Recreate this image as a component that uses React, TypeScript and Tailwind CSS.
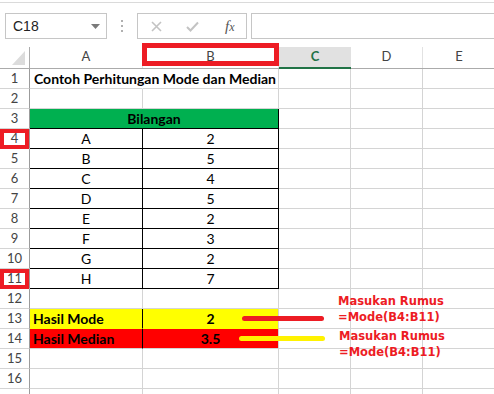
import React from "react";

const font = { fontFamily: "Lato, 'Open Sans', sans-serif" };

type Cell = {
  text?: string;
  cls?: string;
};

const colW = ["w-[30px]", "w-[113px]", "w-[136px]", "w-[72px]", "w-[72px]", "w-[72px]"];

function Row({ n, cells, marked }: { n?: number; cells: Cell[]; marked?: boolean }) {
  return (
    <div className="flex h-[20px]">
      <div
        className={`${colW[0]} shrink-0 border-r border-b border-r-[#9b9b9b] border-b-[#d4d4d4] flex items-center justify-center text-[13px] text-[#444] relative`}
      >
        {n}
        {marked && <div className="absolute left-0 top-0 w-[29px] h-[20px] border-[4px] border-[#ed1c24]" />}
      </div>
      {cells.map((c, i) => (
        <div
          key={i}
          className={`${colW[i + 1]} shrink-0 border-r border-b h-[20px] flex items-center text-[14px] text-black whitespace-nowrap ${
            c.cls ?? "border-[#d4d4d4]"
          }`}
        >
          {c.text}
        </div>
      ))}
    </div>
  );
}

export default function App() {
  const data = [
    ["A", "2"],
    ["B", "5"],
    ["C", "4"],
    ["D", "5"],
    ["E", "2"],
    ["F", "3"],
    ["G", "2"],
    ["H", "7"],
  ];
  const grid = "border-[#d4d4d4]";
  const blank: Cell[] = [{}, {}, {}, {}, {}];

  return (
    <div className="w-[494px] h-[394px] overflow-hidden bg-white relative" style={font}>
      {/* top strip */}
      <div className="h-[3px] border-b border-[#dadada]" />

      {/* formula bar */}
      <div className="flex items-center mt-[10px] h-[26px]">
        <div className="ml-[5px] w-[102px] h-[26px] border border-[#c6c6c6] flex items-center pl-[7px] pr-[6px] text-[14px] text-[#222]">
          <span className="flex-1" style={{ fontFamily: "'Liberation Sans', Arial, sans-serif" }}>C18</span>
          <svg width="9" height="5" viewBox="0 0 9 5">
            <path d="M0 0 L9 0 L4.5 5 Z" fill="#7a7a7a" />
          </svg>
        </div>
        <div className="w-[30px] flex flex-col items-center gap-[3px]">
          <div className="w-[2px] h-[2px] bg-[#b0b0b0]" />
          <div className="w-[2px] h-[2px] bg-[#b0b0b0]" />
          <div className="w-[2px] h-[2px] bg-[#b0b0b0]" />
        </div>
        <div className="w-[110px] h-[26px] border border-[#c6c6c6] flex items-center">
          <svg width="11" height="11" viewBox="0 0 11 11" className="ml-[13px]">
            <path d="M1 1 L10 10 M10 1 L1 10" stroke="#c3c3c3" strokeWidth="1.6" />
          </svg>
          <svg width="13" height="11" viewBox="0 0 13 11" className="ml-[24px]">
            <path d="M1 6 L4.5 9.5 L12 1.5" stroke="#c3c3c3" strokeWidth="2" fill="none" />
          </svg>
          <span
            className="ml-[26px] italic text-[15px] text-[#555]"
            style={{ fontFamily: "'Liberation Serif', serif" }}
          >
            f<span className="text-[12px]">x</span>
          </span>
        </div>
        <div className="ml-[4px] flex-1 h-[26px] border border-r-0 border-[#c6c6c6]" />
      </div>

      {/* column headers */}
      <div className="flex h-[22px] mt-[8px] border-b border-[#ababab] text-[13px] text-[#444]">
        <div className={`${colW[0]} shrink-0 border-r border-[#ababab] relative`}>
          <svg width="13" height="14" viewBox="0 0 13 14" className="absolute left-[12px] top-[4px]">
            <path d="M13 0 L13 14 L0 14 Z" fill="#dcdcdc" />
          </svg>
        </div>
        <div className={`${colW[1]} shrink-0 border-r border-[#e2e2e2] flex items-end justify-center pb-[2px]`}>A</div>
        <div className={`${colW[2]} shrink-0 border-r border-[#e2e2e2] flex items-end justify-center pb-[2px] relative`}>
          B
          <div className="absolute left-[-1px] top-[-4px] w-[137px] h-[23px] border-[5px] border-[#ed1c24]" />
        </div>
        <div className={`${colW[3]} shrink-0 bg-[#e1e1e1] border-b-2 border-[#217346] -mb-[1px] flex items-end justify-center pb-[1px] font-bold text-[#217346]`}>
          C
        </div>
        <div className={`${colW[4]} shrink-0 border-r border-[#e2e2e2] flex items-end justify-center pb-[2px]`}>D</div>
        <div className={`${colW[5]} shrink-0 flex items-end justify-center pb-[2px]`}>E</div>
      </div>

      {/* rows */}
      <Row
        n={1}
        cells={[
          { text: "Contoh Perhitungan Mode dan Median", cls: "border-b-[#d4d4d4] border-r-transparent pl-[4px] font-bold" },
          { cls: grid },
          { cls: grid },
          { cls: grid },
          { cls: grid },
        ]}
      />
      <Row n={2} cells={blank} />
      <div className="flex h-[20px]">
        <div className={`${colW[0]} shrink-0 border-r border-b border-r-[#9b9b9b] border-b-[#d4d4d4] flex items-center justify-center text-[13px] text-[#444]`}>
          3
        </div>
        <div className="w-[249px] shrink-0 bg-[#00b050] border-r border-b border-black flex items-center justify-center text-[14px] font-bold">
          Bilangan
        </div>
        <div className={`w-[72px] shrink-0 border-r border-b ${grid}`} />
        <div className={`w-[72px] shrink-0 border-r border-b ${grid}`} />
        <div className={`w-[72px] shrink-0 border-r border-b ${grid}`} />
      </div>
      {data.map(([a, b], i) => (
        <Row
          key={i}
          n={i + 4}
          marked={i === 0 || i === 7}
          cells={[
            { text: a, cls: "border-black justify-center" },
            { text: b, cls: "border-black justify-center" },
            { cls: grid },
            { cls: grid },
            { cls: grid },
          ]}
        />
      ))}
      <Row n={12} cells={blank} />
      <Row
        n={13}
        cells={[
          { text: "Hasil Mode", cls: "bg-[#ffff00] border-r-black border-b-[#ffff00] pl-[3px] font-bold" },
          { text: "2", cls: "bg-[#ffff00] border-r-[#d4d4d4] border-b-[#ffff00] justify-center font-bold" },
          { cls: grid },
          { cls: grid },
          { cls: grid },
        ]}
      />
      <Row
        n={14}
        cells={[
          { text: "Hasil Median", cls: "bg-[#ff0000] border-r-black border-b-[#d4d4d4] pl-[3px] font-bold" },
          { text: "3.5", cls: "bg-[#ff0000] border-r-[#d4d4d4] border-b-[#d4d4d4] justify-center font-bold" },
          { cls: grid },
          { cls: grid },
          { cls: grid },
        ]}
      />
      <Row n={15} cells={blank} />
      <Row n={16} cells={blank} />
      <Row cells={blank} />

      {/* annotations */}
      <div className="absolute left-[242px] top-[316px] w-[82px] h-[5px] rounded-full bg-[#ed1c24]" />
      <div className="absolute left-[239px] top-[336px] w-[86px] h-[5px] rounded-full bg-[#fff200]" />
      <div
        className="absolute left-[338px] top-[294px] text-[11.5px] leading-[15.5px] font-bold text-[#ed1c24]"
        style={{ fontFamily: "'DejaVu Sans', Verdana, sans-serif" }}
      >
        <div>Masukan Rumus</div>
        <div>=Mode(B4:B11)</div>
      </div>
      <div
        className="absolute left-[339px] top-[329px] text-[11.5px] leading-[15.5px] font-bold text-[#ed1c24]"
        style={{ fontFamily: "'DejaVu Sans', Verdana, sans-serif" }}
      >
        <div>Masukan Rumus</div>
        <div>=Mode(B4:B11)</div>
      </div>
    </div>
  );
}
